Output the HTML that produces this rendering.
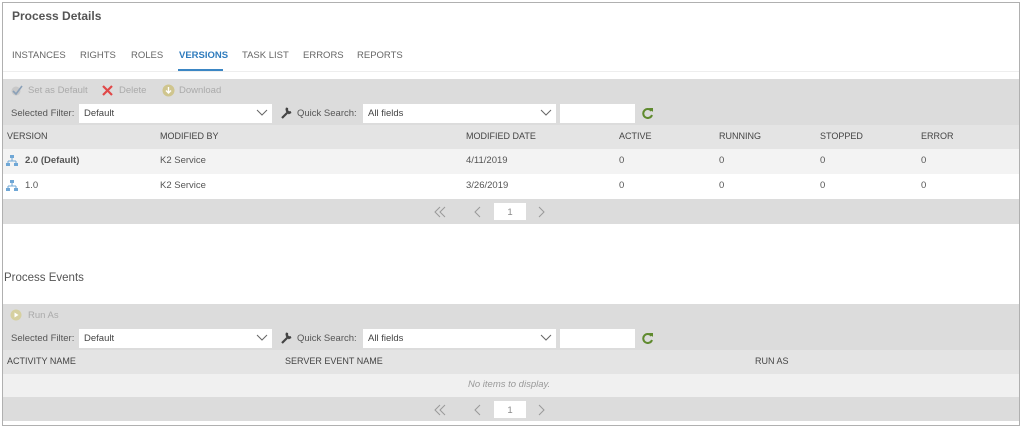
<!DOCTYPE html>
<html><head><style>
*{box-sizing:border-box;margin:0;padding:0}
body{width:1024px;height:429px;background:#fff;font-family:"Liberation Sans",sans-serif;font-size:9.5px;color:#555;position:relative;overflow:hidden}
.frame{position:absolute;left:2px;top:2px;width:1018px;height:424px;border:1px solid #b0b0b0}
.abs{position:absolute;white-space:nowrap}
.band{position:absolute;left:3px;width:1016px}
.sel{position:absolute;background:#fff;height:19px;padding:4px 5px 0;color:#444}
.sel svg{position:absolute;right:4px;top:5px}
.tab{position:absolute;top:50px;font-size:9.5px;color:#666}
.hdr{position:absolute;color:#444;font-size:9px}
</style></head><body>
<div class="frame"></div>
<div class="abs" style="left:12px;top:9px;font-size:12px;font-weight:bold;color:#555">Process Details</div>
<div class="tab" style="left:12px">INSTANCES</div>
<div class="tab" style="left:80px">RIGHTS</div>
<div class="tab" style="left:131px">ROLES</div>
<div class="tab" style="left:179px;color:#2e7bbd;font-weight:bold">VERSIONS</div>
<div style="position:absolute;left:178px;top:69px;width:45px;height:2px;background:#3b86c4"></div>
<div class="tab" style="left:242px">TASK LIST</div>
<div class="tab" style="left:303px">ERRORS</div>
<div class="tab" style="left:357px">REPORTS</div>
<div class="band" style="top:71px;height:1px;background:#eee"></div>

<!-- panel 1 -->
<div class="band" style="top:79px;height:46px;background:#dcdcdc"></div>
<div class="band" style="top:125px;height:24px;background:#e4e4e4"></div>
<div class="band" style="top:149px;height:25px;background:#f3f3f3"></div>
<div class="band" style="top:199px;height:25px;background:#dcdcdc"></div>
<svg class="abs" style="left:10px;top:85px" width="13" height="11"><circle cx="6" cy="6" r="4.5" fill="#c8c8c8"/><path d="M3 6l3 3 6-8" stroke="#8aa0b8" stroke-width="1.6" fill="none"/></svg>
<div class="abs" style="left:28px;top:85px;color:#aaa">Set as Default</div>
<svg class="abs" style="left:101px;top:84px" width="13" height="13"><path d="M2 2l9 9M11 2l-9 9" stroke="#e04848" stroke-width="2.2"/></svg>
<div class="abs" style="left:119px;top:85px;color:#aaa">Delete</div>
<svg class="abs" style="left:162px;top:84px" width="13" height="13"><circle cx="6.5" cy="6.5" r="6" fill="#cfc58e"/><path d="M6.5 3v6M4 6.5l2.5 2.5 2.5-2.5" stroke="#fff" stroke-width="1.4" fill="none"/></svg>
<div class="abs" style="left:179px;top:85px;color:#aaa">Download</div>
<div class="abs" style="left:11px;top:108px;color:#555">Selected Filter:</div>
<div class="sel" style="left:79px;top:104px;width:193px">Default<svg width="12" height="8"><path d="M1 1l5 5 5-5" stroke="#666" fill="none"/></svg></div>
<svg class="abs" style="left:280px;top:106px" width="13" height="13"><path d="M2 12l6-6M7 2a3 3 0 0 0 4 4l-2 1-2-2z" stroke="#444" stroke-width="2.2" fill="#444"/></svg>
<div class="abs" style="left:297px;top:108px">Quick Search:</div>
<div class="sel" style="left:363px;top:104px;width:193px">All fields<svg width="12" height="8"><path d="M1 1l5 5 5-5" stroke="#666" fill="none"/></svg></div>
<div class="sel" style="left:560px;top:104px;width:75px"></div>
<svg class="abs" style="left:642px;top:107px" width="12" height="12"><path d="M9.5 4A4.5 4.5 0 1 0 10 8" stroke="#5f8a2e" stroke-width="2" fill="none"/><path d="M7 1l4 0 0 4z" fill="#5f8a2e"/></svg>
<div class="hdr" style="left:7px;top:131px">VERSION</div>
<div class="hdr" style="left:160px;top:131px">MODIFIED BY</div>
<div class="hdr" style="left:466px;top:131px">MODIFIED DATE</div>
<div class="hdr" style="left:619px;top:131px">ACTIVE</div>
<div class="hdr" style="left:719px;top:131px">RUNNING</div>
<div class="hdr" style="left:820px;top:131px">STOPPED</div>
<div class="hdr" style="left:921px;top:131px">ERROR</div>
<svg class="abs" style="left:6px;top:155px" width="13" height="12"><g fill="#6fa7d6"><rect x="4" y="0" width="4" height="3"/><rect x="0" y="8" width="4" height="3"/><rect x="8" y="8" width="4" height="3"/></g><path d="M6 3v3M2 6h8M2 6v2M10 6v2" stroke="#6fa7d6"/></svg>
<div class="abs" style="left:25px;top:155px;font-weight:bold;color:#555">2.0 (Default)</div>
<div class="abs" style="left:160px;top:155px">K2 Service</div>
<div class="abs" style="left:466px;top:155px">4/11/2019</div>
<div class="abs" style="left:619px;top:155px">0</div><div class="abs" style="left:719px;top:155px">0</div><div class="abs" style="left:820px;top:155px">0</div><div class="abs" style="left:921px;top:155px">0</div>
<svg class="abs" style="left:6px;top:180px" width="13" height="12"><g fill="#6fa7d6"><rect x="4" y="0" width="4" height="3"/><rect x="0" y="8" width="4" height="3"/><rect x="8" y="8" width="4" height="3"/></g><path d="M6 3v3M2 6h8M2 6v2M10 6v2" stroke="#6fa7d6"/></svg>
<div class="abs" style="left:25px;top:180px">1.0</div>
<div class="abs" style="left:160px;top:180px">K2 Service</div>
<div class="abs" style="left:466px;top:180px">3/26/2019</div>
<div class="abs" style="left:619px;top:180px">0</div><div class="abs" style="left:719px;top:180px">0</div><div class="abs" style="left:820px;top:180px">0</div><div class="abs" style="left:921px;top:180px">0</div>
<svg class="abs" style="left:432px;top:205px" width="120" height="14"><path d="M8 2l-5 5 5 5M13 2l-5 5 5 5M48 2l-5 5 5 5M107 2l5 5-5 5" stroke="#999" fill="none"/></svg>
<div class="sel" style="left:494px;top:203px;width:32px;height:17px;text-align:center;padding:4px 0 0;color:#888">1</div>

<div class="abs" style="left:4px;top:272px;font-size:11.5px;color:#555">Process Events</div>
<!-- panel 2 -->
<div class="band" style="top:304px;height:46px;background:#dcdcdc"></div>
<div class="band" style="top:350px;height:24px;background:#e4e4e4"></div>
<div class="band" style="top:374px;height:23px;background:#f0f0f0"></div>
<div class="band" style="top:397px;height:24px;background:#dcdcdc"></div>
<svg class="abs" style="left:10px;top:309px" width="12" height="12"><circle cx="6" cy="6" r="5.5" fill="#d6d0a0"/><path d="M4.5 3.5v5l4-2.5z" fill="#fff"/></svg>
<div class="abs" style="left:28px;top:310px;color:#aaa">Run As</div>
<div class="abs" style="left:11px;top:333px">Selected Filter:</div>
<div class="sel" style="left:79px;top:329px;width:193px">Default<svg width="12" height="8"><path d="M1 1l5 5 5-5" stroke="#666" fill="none"/></svg></div>
<svg class="abs" style="left:280px;top:331px" width="13" height="13"><path d="M2 12l6-6M7 2a3 3 0 0 0 4 4l-2 1-2-2z" stroke="#444" stroke-width="2.2" fill="#444"/></svg>
<div class="abs" style="left:297px;top:333px">Quick Search:</div>
<div class="sel" style="left:363px;top:329px;width:193px">All fields<svg width="12" height="8"><path d="M1 1l5 5 5-5" stroke="#666" fill="none"/></svg></div>
<div class="sel" style="left:560px;top:329px;width:75px"></div>
<svg class="abs" style="left:642px;top:332px" width="12" height="12"><path d="M9.5 4A4.5 4.5 0 1 0 10 8" stroke="#5f8a2e" stroke-width="2" fill="none"/><path d="M7 1l4 0 0 4z" fill="#5f8a2e"/></svg>
<div class="hdr" style="left:7px;top:356px">ACTIVITY NAME</div>
<div class="hdr" style="left:285px;top:356px">SERVER EVENT NAME</div>
<div class="hdr" style="left:755px;top:356px">RUN AS</div>
<div class="abs" style="left:468px;top:379px;font-style:italic;color:#999">No items to display.</div>
<svg class="abs" style="left:432px;top:403px" width="120" height="14"><path d="M8 2l-5 5 5 5M13 2l-5 5 5 5M48 2l-5 5 5 5M107 2l5 5-5 5" stroke="#999" fill="none"/></svg>
<div class="sel" style="left:494px;top:401px;width:32px;height:17px;text-align:center;padding:4px 0 0;color:#888">1</div>
</body></html>
